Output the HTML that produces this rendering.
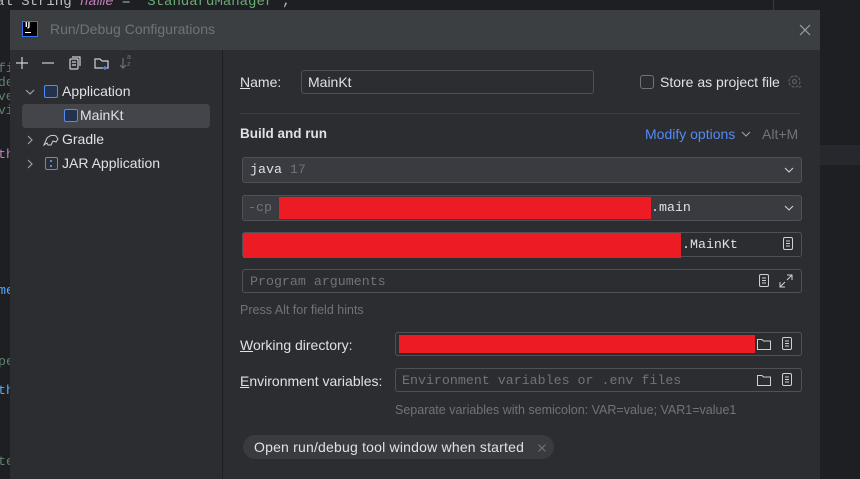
<!DOCTYPE html>
<html><head><meta charset="utf-8"><style>
*{margin:0;padding:0;box-sizing:border-box}
body{width:860px;height:479px;overflow:hidden;background:#1e1f22;position:relative;font-family:"Liberation Sans",sans-serif;font-size:14px;color:#dfe1e5}
.a{position:absolute;white-space:nowrap}
.mono{font-family:"Liberation Mono",monospace;font-size:13.3px}
.fld{position:absolute;border:1px solid #4e5157;border-radius:3px}
.red{position:absolute;background:#ed1c24}
.g{color:#6f737a}
svg{position:absolute}
</style></head><body>
<!-- editor bits -->
<div class="a mono" style="left:-4px;top:-6px;font-size:14px;color:#bcbec4">al String <span style="color:#c77dbb;font-style:italic">name</span> = <span style="color:#6aab73">"StandardManager"</span>;</div>
<div class="a mono" style="left:-2px;top:62px;font-size:13px;line-height:14px;color:#5f826b">fi<br>de<br>ve<br>vi</div>
<div class="a mono" style="left:-2px;top:147px;color:#c77dbb">th</div>
<div class="a mono" style="left:-2px;top:283px;color:#56a8f5">me</div>
<div class="a mono" style="left:-2px;top:354px;color:#5f826b">pe</div>
<div class="a mono" style="left:-2px;top:383px;color:#56a8f5">th</div>
<div class="a mono" style="left:-2px;top:454px;color:#5f826b">te</div>
<div class="a" style="left:820px;top:145px;width:40px;height:20px;background:#26282e"></div>
<div class="a" style="left:773px;top:0;width:1px;height:10px;background:#393b40"></div>
<!-- dialog -->
<div class="a" style="left:10px;top:10px;width:810px;height:469px;background:#2b2d30"></div>
<div class="a" style="left:10px;top:10px;width:810px;height:40px;background:#3c3f41"></div>
<div class="a" style="left:22px;top:21px;width:16px;height:16px;background:#000;border:1px solid #3574f0"></div>
<div class="a" style="left:25px;top:22px;font-size:7px;line-height:7px;font-weight:bold;color:#fff;font-family:'DejaVu Sans',sans-serif">IJ</div>
<div class="a" style="left:25px;top:32px;width:6px;height:1px;background:#fff"></div>
<div class="a" style="left:50px;top:21px;font-size:14px;color:#6f737a">Run/Debug Configurations</div>
<svg style="left:798px;top:23px" width="14" height="14"><path d="M2 2L12 12M12 2L2 12" stroke="#9da0a8" stroke-width="1.2"/></svg>
<div class="a" style="left:222px;top:50px;width:1px;height:429px;background:#1e1f22"></div>
<!-- toolbar -->
<svg style="left:14px;top:55px" width="130" height="16" fill="none" stroke="#ced0d6" stroke-width="1.2">
<path d="M8 2V14M2 8H14"/><path d="M28 8H40"/>
<rect x="56" y="4" width="8" height="10" rx="1"/><path d="M58 2H66V11"/><path d="M58 7H62M58 10H62"/>
<path d="M81 4H86L88 6H94V13H81Z"/><path d="M91 11V15M89 13H93" stroke="#548af7"/>
<path d="M109 3V13M106 10L109 13L112 10" stroke="#6f737a"/>
</svg>
<div class="a" style="left:127px;top:54px;font-size:7px;line-height:7px;color:#6f737a">a<br>z</div>
<!-- tree -->
<svg style="left:25px;top:87px" width="10" height="10"><path d="M1 3L5 7L9 3" stroke="#9da0a8" fill="none" stroke-width="1.2"/></svg>
<div class="a" style="left:44px;top:85px;width:14px;height:13px;border:1px solid #548af7;border-radius:2px;background:#25324d"></div>
<div class="a" style="left:62px;top:83px">Application</div>
<div class="a" style="left:22px;top:104px;width:188px;height:24px;background:#43454a;border-radius:4px"></div>
<div class="a" style="left:64px;top:109px;width:14px;height:13px;border:1px solid #548af7;border-radius:2px;background:#25324d"></div>
<div class="a" style="left:80px;top:107px">MainKt</div>
<svg style="left:25px;top:135px" width="10" height="10"><path d="M3 1L7 5L3 9" stroke="#9da0a8" fill="none" stroke-width="1.2"/></svg>
<svg style="left:43px;top:133px" width="16" height="14" fill="none" stroke="#ced0d6" stroke-width="1"><path d="M1 12L4 5Q8 1 13 3L15 6L13 9L10 8L8 12H5L4 10Z"/></svg>
<div class="a" style="left:62px;top:131px">Gradle</div>
<svg style="left:25px;top:159px" width="10" height="10"><path d="M3 1L7 5L3 9" stroke="#9da0a8" fill="none" stroke-width="1.2"/></svg>
<div class="a" style="left:45px;top:157px;width:13px;height:13px;border:1px solid #548af7;border-radius:2px"></div>
<div class="a" style="left:50px;top:160px;width:2px;height:7px;border-left:2px dotted #548af7"></div>
<div class="a" style="left:62px;top:155px">JAR Application</div>
<!-- right -->
<div class="a" style="left:240px;top:74px"><u>N</u>ame:</div>
<div class="fld" style="left:301px;top:70px;width:293px;height:24px"></div>
<div class="a" style="left:308px;top:74px">MainKt</div>
<div class="a" style="left:640px;top:75px;width:14px;height:14px;border:1px solid #6f737a;border-radius:3px"></div>
<div class="a" style="left:660px;top:74px">Store as project file</div>
<svg style="left:787px;top:74px" width="16" height="16" fill="none" stroke="#5a5d63" stroke-width="1.2"><circle cx="7.5" cy="7.5" r="5.5" stroke-dasharray="3 1.3"/><circle cx="7.5" cy="7.5" r="2"/><path d="M12 14L14 12" /></svg>
<div class="a" style="left:240px;top:113px;width:560px;height:1px;background:#393b40"></div>
<div class="a" style="left:240px;top:126px;font-weight:bold;font-size:13.5px">Build and run</div>
<div class="a" style="left:645px;top:126px;color:#548af7">Modify options</div>
<svg style="left:741px;top:130px" width="10" height="8"><path d="M1 2L5 6L9 2" stroke="#9da0a8" fill="none" stroke-width="1.1"/></svg>
<div class="a g" style="left:762px;top:126px">Alt+M</div>
<div class="fld" style="left:242px;top:157px;width:560px;height:26px;background:#393b40"></div>
<div class="a mono" style="left:250px;top:162px">java <span class="g">17</span></div>
<svg style="left:784px;top:166px" width="10" height="8"><path d="M1 2L5 6L9 2" stroke="#ced0d6" fill="none" stroke-width="1.1"/></svg>
<div class="fld" style="left:242px;top:195px;width:560px;height:26px;background:#393b40"></div>
<div class="a mono g" style="left:248px;top:200px">-cp</div>
<div class="red" style="left:279px;top:197px;width:372px;height:22px"></div>
<div class="a mono" style="left:651px;top:200px">.main</div>
<svg style="left:784px;top:204px" width="10" height="8"><path d="M1 2L5 6L9 2" stroke="#ced0d6" fill="none" stroke-width="1.1"/></svg>
<div class="fld" style="left:242px;top:232px;width:560px;height:25px"></div>
<div class="red" style="left:243px;top:233px;width:438px;height:25px"></div>
<div class="a mono" style="left:682px;top:237px">.MainKt</div>
<svg style="left:781px;top:236px" width="14" height="16" fill="none" stroke="#ced0d6" stroke-width="1"><rect x="2.5" y="1.5" width="9" height="12" rx="1.5"/><path d="M5 5H9M5 7.5H9M5 10H9"/></svg>
<div class="fld" style="left:242px;top:269px;width:560px;height:24px"></div>
<div class="a mono g" style="left:250px;top:274px">Program arguments</div>
<svg style="left:757px;top:273px" width="14" height="16" fill="none" stroke="#ced0d6" stroke-width="1"><rect x="2.5" y="1.5" width="9" height="12" rx="1.5"/><path d="M5 5H9M5 7.5H9M5 10H9"/></svg>
<svg style="left:778px;top:273px" width="16" height="16" fill="none" stroke="#ced0d6" stroke-width="1"><path d="M9 2H14V7M14 2L9 7M2 9V14H7M2 14L7 9"/></svg>
<div class="a g" style="left:240px;top:303px;font-size:12.5px">Press Alt for field hints</div>
<div class="a" style="left:240px;top:337px"><u>W</u>orking directory:</div>
<div class="fld" style="left:395px;top:332px;width:407px;height:24px"></div>
<div class="red" style="left:399px;top:335px;width:356px;height:18px"></div>
<svg style="left:756px;top:336px" width="16" height="16" fill="none" stroke="#ced0d6" stroke-width="1"><path d="M1.5 3.5H6L7.5 5H14.5V13.5H1.5Z"/></svg>
<svg style="left:780px;top:336px" width="14" height="16" fill="none" stroke="#ced0d6" stroke-width="1"><rect x="2.5" y="1.5" width="9" height="12" rx="1.5"/><path d="M5 5H9M5 7.5H9M5 10H9"/></svg>
<div class="a" style="left:240px;top:373px"><u>E</u>nvironment variables:</div>
<div class="fld" style="left:395px;top:368px;width:407px;height:24px"></div>
<div class="a mono g" style="left:402px;top:373px">Environment variables or .env files</div>
<svg style="left:756px;top:372px" width="16" height="16" fill="none" stroke="#ced0d6" stroke-width="1"><path d="M1.5 3.5H6L7.5 5H14.5V13.5H1.5Z"/></svg>
<svg style="left:780px;top:372px" width="14" height="16" fill="none" stroke="#ced0d6" stroke-width="1"><rect x="2.5" y="1.5" width="9" height="12" rx="1.5"/><path d="M5 5H9M5 7.5H9M5 10H9"/></svg>
<div class="a g" style="left:395px;top:403px;font-size:12.5px">Separate variables with semicolon: VAR=value; VAR1=value1</div>
<div class="a" style="left:243px;top:435px;width:311px;height:24px;background:#393b40;border-radius:12px"></div>
<div class="a" style="left:254px;top:439px;letter-spacing:0.2px">Open run/debug tool window when started</div>
<svg style="left:537px;top:443px" width="10" height="10"><path d="M1.5 1.5L8.5 8.5M8.5 1.5L1.5 8.5" stroke="#6f737a" stroke-width="1.1"/></svg>
</body></html>
